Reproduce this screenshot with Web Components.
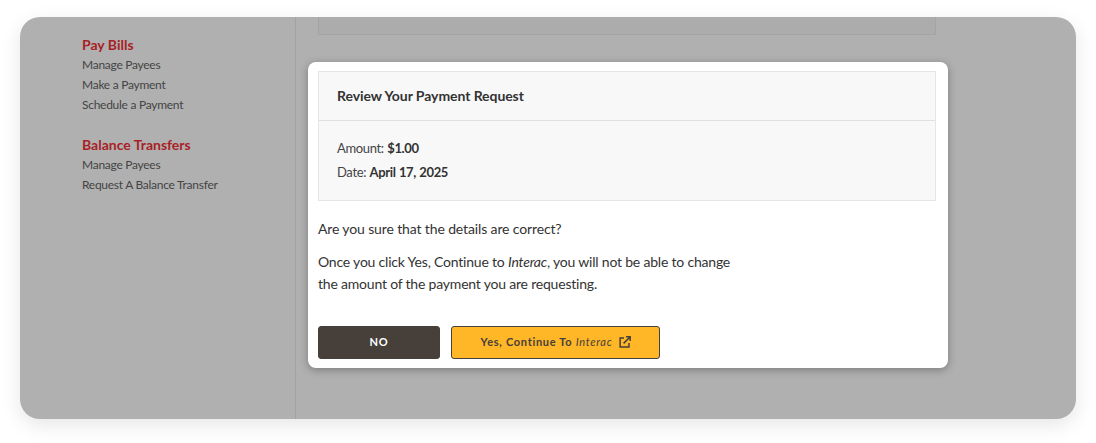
<!DOCTYPE html>
<html lang="en">
<head>
<meta charset="utf-8">
<title>Review Your Payment Request</title>
<style>
    html, body { margin: 0; background: #fff; }
    body { padding: 17px 20px 24px; font-family: Lato, "Liberation Sans", sans-serif; }
</style>
</head>
<body>
<app-frame>
    <side-nav slot="nav">
        <nav-group title="Pay Bills">
            <a>Manage Payees</a>
            <a>Make a Payment</a>
            <a>Schedule a Payment</a>
        </nav-group>
        <nav-group title="Balance Transfers">
            <a>Manage Payees</a>
            <a>Request A Balance Transfer</a>
        </nav-group>
    </side-nav>
    <review-dialog slot="dialog" amount="$1.00" date="April 17, 2025"></review-dialog>
</app-frame>

<script>
class AppFrame extends HTMLElement {
    constructor() {
        super();
        this.attachShadow({ mode: "open" });
        this.shadowRoot.innerHTML = `
            <style>
                :host {
                    position: relative;
                    display: grid;
                    grid-template-columns: 276px 1fr;
                    width: 1056px;
                    height: 402px;
                    border-radius: 20px;
                    background: #b0b0b0;
                    box-shadow: 0 6px 20px rgba(0, 0, 0, 0.1);
                    overflow: hidden;
                }

                .nav {
                    border-right: 1px solid #a3a3a3;
                }

                .main {
                    padding: 0 140px 0 22px;
                }

                .stub {
                    height: 18px;
                    box-sizing: border-box;
                    background: #acacac;
                    border: 1px solid #a4a4a4;
                    border-top: 0;
                }

                .overlay {
                    position: absolute;
                    top: 45px;
                    left: 288px;
                }
            </style>
            <div class="nav"><slot name="nav"></slot></div>
            <div class="main"><div class="stub"></div></div>
            <div class="overlay"><slot name="dialog"></slot></div>
        `;
    }
}

class SideNav extends HTMLElement {
    constructor() {
        super();
        this.attachShadow({ mode: "open" });
        this.shadowRoot.innerHTML = `
            <style>
                :host {
                    display: flex;
                    flex-direction: column;
                    gap: 21px;
                    padding: 19px 0 0 62px;
                }
            </style>
            <slot></slot>
        `;
    }
}

class NavGroup extends HTMLElement {
    constructor() {
        super();
        this.attachShadow({ mode: "open" });
        this.shadowRoot.innerHTML = `
            <style>
                :host {
                    display: block;
                }

                h3 {
                    margin: 0;
                    font: 700 14px/18px Lato, "Liberation Sans", sans-serif;
                    color: #a91f26;
                }

                .links {
                    display: flex;
                    flex-direction: column;
                    padding-top: 1px;
                    font: 400 12px/20px Lato, "Liberation Sans", sans-serif;
                    letter-spacing: -0.27px;
                    color: #444;
                }

                ::slotted(a) {
                    display: block;
                }
            </style>
            <h3></h3>
            <div class="links"><slot></slot></div>
        `;
        this.shadowRoot.querySelector("h3").textContent = this.getAttribute("title");
    }
}

class ReviewDialog extends HTMLElement {
    constructor() {
        super();
        this.attachShadow({ mode: "open" });
        this.shadowRoot.innerHTML = `
            <style>
                :host {
                    display: block;
                    box-sizing: border-box;
                    width: 640px;
                    height: 306px;
                    padding: 9px 12px 9px 10px;
                    border-radius: 8px;
                    background: #fff;
                    box-shadow: 0 2px 8px rgba(0, 0, 0, 0.3);
                    color: #333;
                    font: 400 14px/23px Lato, "Liberation Sans", sans-serif;
                    letter-spacing: -0.2px;
                }

                .panel {
                    background: #f8f8f8;
                    border: 1px solid #e6e6e6;
                }

                .panel header {
                    height: 49px;
                    box-sizing: border-box;
                    padding: 0 18px 1px;
                    display: flex;
                    align-items: center;
                    border-bottom: 1px solid #e0e0e0;
                    font-weight: 700;
                    font-size: 14px;
                    letter-spacing: -0.07px;
                    color: #333;
                }

                .details {
                    height: 79px;
                    box-sizing: border-box;
                    padding: 15px 18px 0;
                    font-size: 13px;
                    letter-spacing: -0.35px;
                    word-spacing: 0.5px;
                }

                .details div {
                    height: 24px;
                    line-height: 24px;
                    color: #444;
                }

                .details b {
                    color: #333;
                }

                p {
                    margin: 0;
                }

                .question {
                    margin-top: 16px;
                    letter-spacing: -0.13px;
                }

                .warning {
                    margin-top: 11px;
                    width: 430px;
                    line-height: 22px;
                }

                .actions {
                    display: flex;
                    gap: 11px;
                    margin-top: 31px;
                }
            </style>
            <div class="panel">
                <header>Review Your Payment Request</header>
                <div class="details">
                    <div>Amount: <b id="amount"></b></div>
                    <div>Date: <b id="date"></b></div>
                </div>
            </div>
            <p class="question">Are you sure that the details are correct?</p>
            <p class="warning">Once you click Yes, Continue to <i>Interac</i>, you will not be able to change the amount of the payment you are requesting.</p>
            <div class="actions">
                <action-button variant="dark">NO</action-button>
                <action-button variant="primary">Yes, Continue To&nbsp;<i>Interac</i>
                    <svg slot="icon" width="12" height="12" viewBox="0 0 13 13" fill="none" stroke="#463f3a" stroke-width="1.6">
                        <path d="M5.5 2.2H1.2v9.6h9.6V7.5"/>
                        <path d="M5 8 11.6 1.4M7.6 0.9h4.5v4.5"/>
                    </svg>
                </action-button>
            </div>
        `;
        this.shadowRoot.getElementById("amount").textContent = this.getAttribute("amount");
        this.shadowRoot.getElementById("date").textContent = this.getAttribute("date");
    }
}

class ActionButton extends HTMLElement {
    constructor() {
        super();
        this.attachShadow({ mode: "open" });
        this.shadowRoot.innerHTML = `
            <style>
                :host {
                    display: block;
                }

                button {
                    display: flex;
                    align-items: center;
                    justify-content: center;
                    height: 33px;
                    box-sizing: border-box;
                    padding: 0 0 2px;
                    border-radius: 3px;
                    font: 700 11px/1 Lato, "Liberation Sans", sans-serif;
                    letter-spacing: 0.7px;
                    white-space: pre;
                    cursor: pointer;
                }

                :host([variant="dark"]) button {
                    width: 122px;
                    background: #463f3a;
                    border: 1px solid #463f3a;
                    color: #fff;
                }

                :host([variant="primary"]) button {
                    width: 209px;
                    padding-left: 1px;
                    background: #ffb627;
                    border: 1px solid #463f3a;
                    color: #463f3a;
                }

                ::slotted(i) {
                    font-weight: 400;
                }

                ::slotted(svg) {
                    margin-left: 7px;
                }
            </style>
            <button type="button"><slot></slot><slot name="icon"></slot></button>
        `;
    }
}

customElements.define("app-frame", AppFrame);
customElements.define("side-nav", SideNav);
customElements.define("nav-group", NavGroup);
customElements.define("review-dialog", ReviewDialog);
customElements.define("action-button", ActionButton);
</script>
</body>
</html>
